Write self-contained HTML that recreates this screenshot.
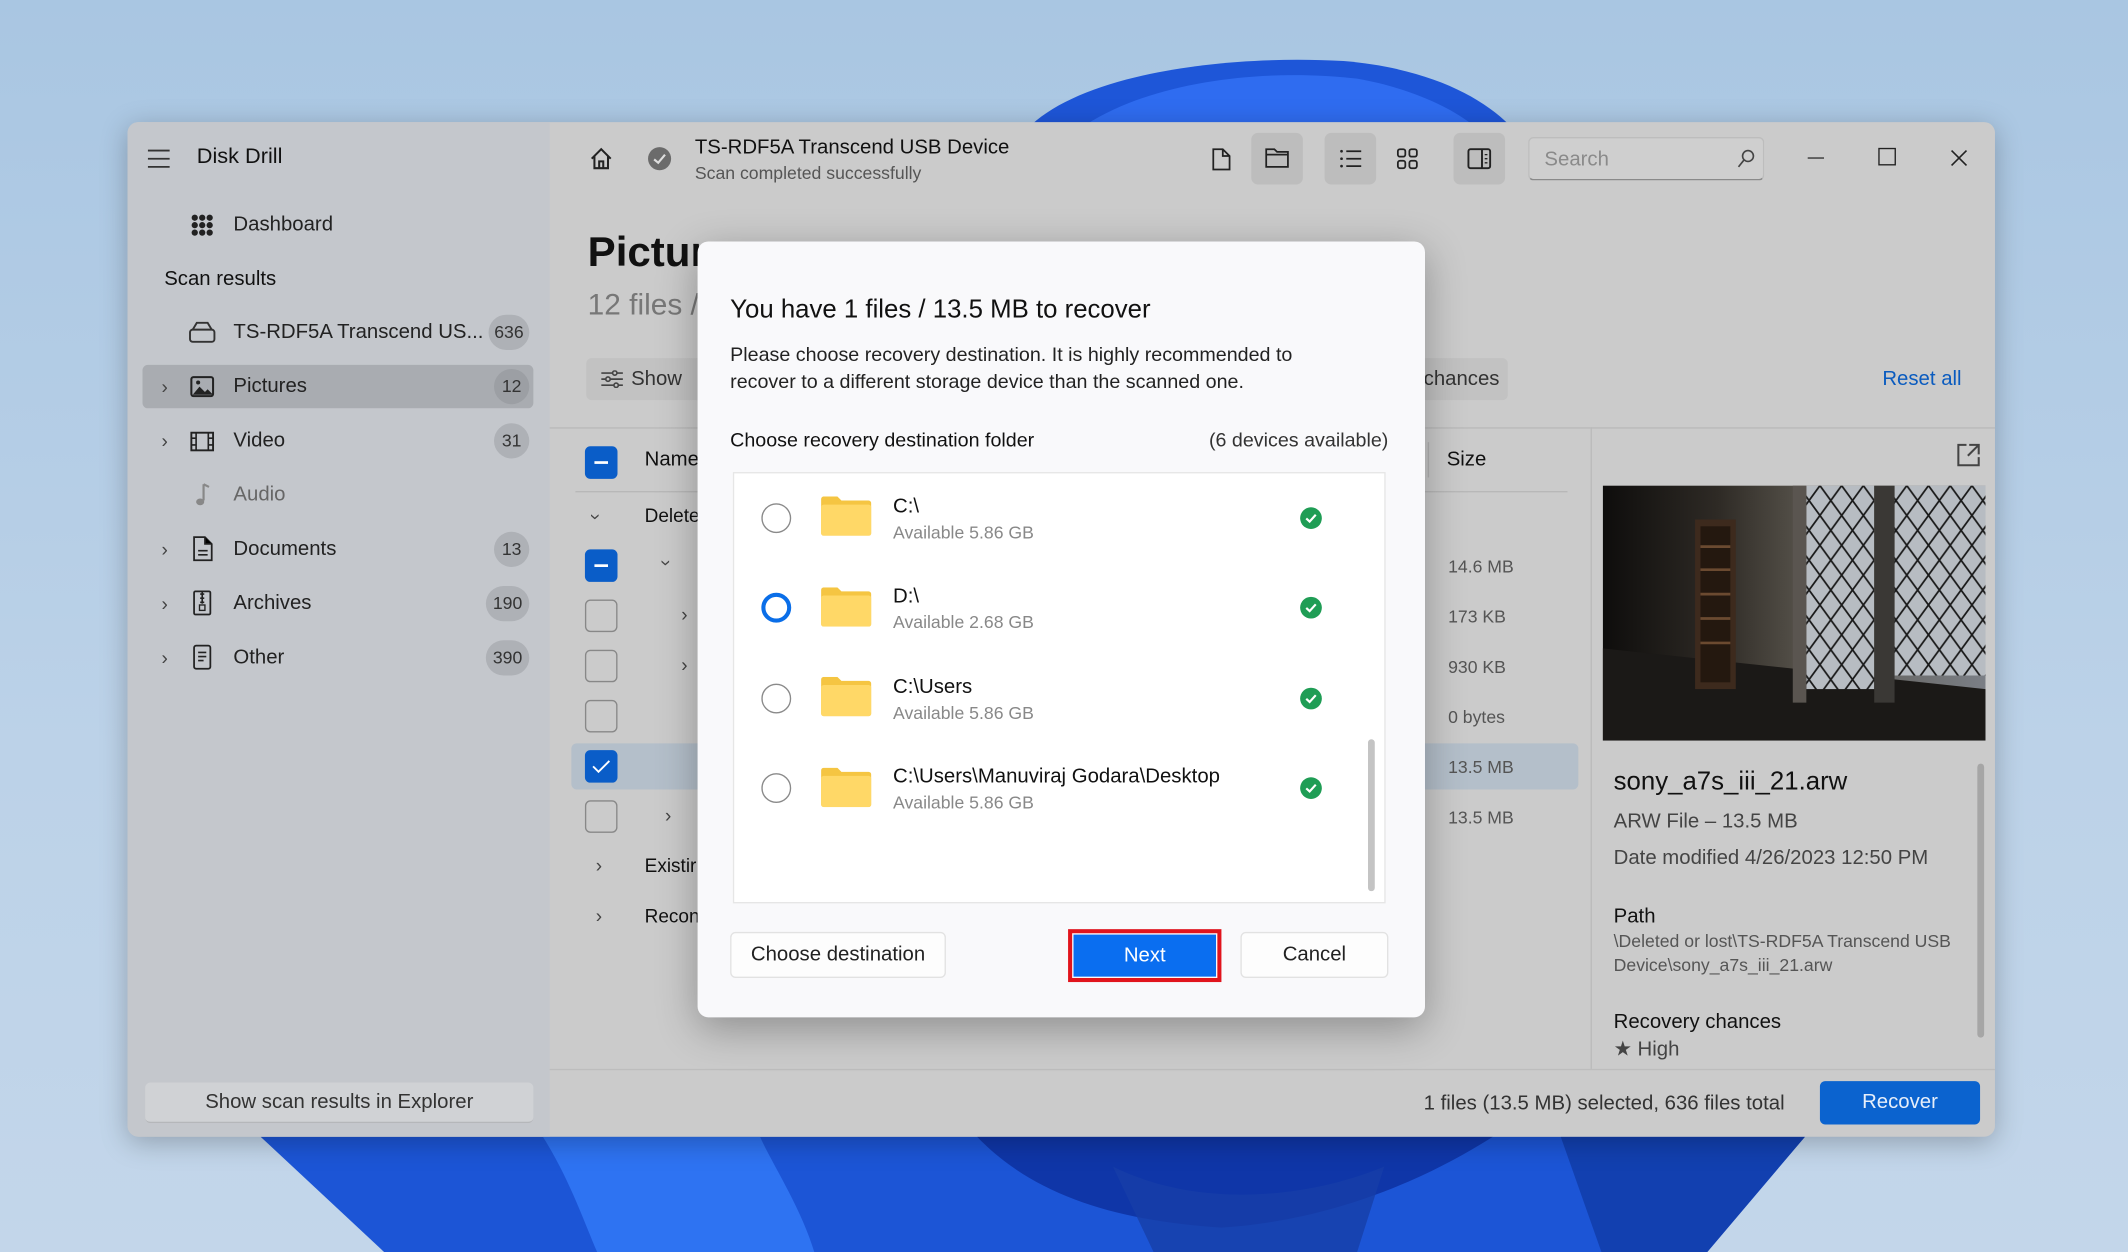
<!DOCTYPE html>
<html><head><meta charset="utf-8"><style>
*{box-sizing:border-box;margin:0;padding:0}
html,body{width:2128px;height:1252px;overflow:hidden}
body{font-family:"Liberation Sans",sans-serif;background:#b8cfe5}
#s{position:absolute;left:0;top:0;width:1568px;height:923px;transform:scale(1.35714,1.35644);transform-origin:0 0;overflow:hidden;background:linear-gradient(180deg,#a9c6e2 0%,#bcd2e8 60%,#c3d6ea 100%)}
.a{position:absolute}
.t{position:absolute;white-space:nowrap;line-height:1}
.win{left:94px;top:90px;width:1376px;height:748px;border-radius:8px;overflow:hidden;background:#cbcbcb;box-shadow:0 4px 20px rgba(0,0,0,.25)}
.side{left:0;top:0;width:311px;height:748px;background:#c4c7cc}
.badge{position:absolute;height:26px;border-radius:13px;background:#aeb1b6;font-size:13px;color:#333;text-align:center;line-height:26px}
.chev{position:absolute;font-size:14px;color:#444}
.cb{position:absolute;width:24px;height:24px;border:1.5px solid #888;border-radius:4px}
.cbb{position:absolute;width:24px;height:24px;border-radius:4px;background:#0a5dc8}
.sz{position:absolute;font-size:13px;color:#555}
.dlg{left:514px;top:178px;width:536px;height:572px;background:#f9f9fb;border-radius:8px;box-shadow:0 8px 30px rgba(0,0,0,.3)}
.rad{position:absolute;width:22px;height:22px;border-radius:50%;border:1.5px solid #8a8a8a;background:#fff}
.fold{position:absolute;width:37px;height:29px}
.ok{position:absolute;width:16px;height:16px;border-radius:50%;background:#1f9d55}
.btn{position:absolute;height:34px;border-radius:4px;background:#fdfdfd;border:1px solid #e2e2e2;font-size:15px;color:#222;text-align:center;line-height:32px}
</style></head><body><div id="s">
<svg class="a" style="left:0;top:0" width="1568" height="923">
<path d="M760 92 C800 55 900 40 990 45 C1050 50 1090 70 1112 92 Z" fill="#1e56d8"/>
<path d="M800 92 C850 60 930 50 1000 58 C1040 65 1070 80 1085 92Z" fill="#2f6cf0"/>
<path d="M192 838 L1330 838 L1258 923 L283 923 Z" fill="#1c55d6"/>
<path d="M400 838 C420 870 430 900 440 923 L600 923 C590 890 570 860 560 838Z" fill="#2e73f2"/>
<path d="M720 838 C760 880 820 900 900 905 C980 900 1050 870 1100 838Z" fill="#0f36a8"/>
<path d="M820 860 C880 890 960 885 1020 860 L1000 923 L850 923Z" fill="#163ea8" opacity=".8"/>
<path d="M1150 838 L1330 838 L1258 923 L1180 923Z" fill="#1240b0"/>
</svg>
<div class="a win">
 <div class="a side">
  <svg class="a" style="left:14px;top:20px" width="18" height="14"><path d="M1 1h16M1 7h16M1 13h16" stroke="#333" stroke-width="1.3"/></svg>
  <div class="t" style="left:51px;top:18px;font-size:16px;color:#111">Disk Drill</div>
  <svg class="a" style="left:47px;top:68px" width="16" height="16" fill="#222"><circle cx="2.5" cy="2.5" r="2.3"/><circle cx="8" cy="2.5" r="2.3"/><circle cx="13.5" cy="2.5" r="2.3"/><circle cx="2.5" cy="8" r="2.3"/><circle cx="8" cy="8" r="2.3"/><circle cx="13.5" cy="8" r="2.3"/><circle cx="2.5" cy="13.5" r="2.3"/><circle cx="8" cy="13.5" r="2.3"/><circle cx="13.5" cy="13.5" r="2.3"/></svg>
  <div class="t" style="left:78px;top:68px;font-size:15px;color:#222">Dashboard</div>
  <div class="t" style="left:27px;top:108px;font-size:15px;color:#111">Scan results</div>
  <svg class="a" style="left:45px;top:147px" width="20" height="16"><rect x="1" y="6" width="18" height="9" rx="2" fill="none" stroke="#333" stroke-width="1.4"/><path d="M3 6 L6 1 H14 L17 6" fill="none" stroke="#333" stroke-width="1.4"/></svg>
  <div class="t" style="left:78px;top:147px;font-size:15px;color:#222">TS-RDF5A Transcend US...</div>
  <div class="badge" style="left:266px;top:142px;width:30px">636</div>
  <div class="a" style="left:11px;top:179px;width:288px;height:32px;border-radius:4px;background:#a9acb1"></div>
  <div class="chev" style="left:25px;top:187px">&#8250;</div>
  <svg class="a" style="left:46px;top:187px" width="18" height="16"><rect x="1" y="1" width="16" height="14" rx="1.5" fill="none" stroke="#222" stroke-width="1.5"/><path d="M2 14 L7 8 L11 12 L13 10 L17 14Z" fill="#222"/><circle cx="6" cy="5" r="1.5" fill="#222"/></svg>
  <div class="t" style="left:78px;top:187px;font-size:15px;color:#222">Pictures</div>
  <div class="badge" style="left:270px;top:182px;width:26px;background:#9c9fa4">12</div>
  <div class="chev" style="left:25px;top:227px">&#8250;</div>
  <svg class="a" style="left:46px;top:228px" width="18" height="15"><rect x="1" y="1" width="16" height="13" fill="none" stroke="#222" stroke-width="1.4"/><path d="M4.5 1v13M13.5 1v13M1 5h3.5M1 10h3.5M13.5 5h3.5M13.5 10h3.5" stroke="#222" stroke-width="1.2"/></svg>
  <div class="t" style="left:78px;top:227px;font-size:15px;color:#222">Video</div>
  <div class="badge" style="left:270px;top:222px;width:26px">31</div>
  <svg class="a" style="left:48px;top:266px" width="14" height="18"><path d="M8 1 V13" stroke="#888" stroke-width="1.6"/><ellipse cx="5.5" cy="14" rx="3" ry="2.5" fill="#888"/><path d="M8 1 L12 3" stroke="#888" stroke-width="1.6"/></svg>
  <div class="t" style="left:78px;top:267px;font-size:15px;color:#666">Audio</div>
  <div class="chev" style="left:25px;top:307px">&#8250;</div>
  <svg class="a" style="left:48px;top:305px" width="15" height="19"><path d="M1 1h8l5 5v12H1Z" fill="none" stroke="#222" stroke-width="1.3"/><path d="M9 1v5h5M4 11h7M4 14h7" stroke="#222" stroke-width="1.2"/></svg>
  <div class="t" style="left:78px;top:307px;font-size:15px;color:#222">Documents</div>
  <div class="badge" style="left:270px;top:302px;width:26px">13</div>
  <div class="chev" style="left:25px;top:347px">&#8250;</div>
  <svg class="a" style="left:48px;top:345px" width="14" height="19"><rect x="1" y="1" width="12" height="17" rx="1" fill="none" stroke="#222" stroke-width="1.3"/><path d="M7 1v9M5.5 3h3M5.5 6h3M5.5 9h3" stroke="#222" stroke-width="1.2"/><rect x="5" y="11" width="4" height="4" fill="none" stroke="#222"/></svg>
  <div class="t" style="left:78px;top:347px;font-size:15px;color:#222">Archives</div>
  <div class="badge" style="left:264px;top:342px;width:32px">190</div>
  <div class="chev" style="left:25px;top:387px">&#8250;</div>
  <svg class="a" style="left:48px;top:385px" width="14" height="19"><rect x="1" y="1" width="12" height="17" rx="1.5" fill="none" stroke="#222" stroke-width="1.3"/><path d="M4 6h6M4 9h6M4 12h4" stroke="#222" stroke-width="1.2"/></svg>
  <div class="t" style="left:78px;top:387px;font-size:15px;color:#222">Other</div>
  <div class="badge" style="left:264px;top:382px;width:32px">390</div>
  <div class="a" style="left:13px;top:708px;width:286px;height:30px;border-radius:4px;background:#d0d2d5;border-bottom:1px solid #b5b7ba;font-size:15px;color:#333;text-align:center;line-height:30px">Show scan results in Explorer</div>
 </div>
 <!-- main header -->
 <svg class="a" style="left:340px;top:18px" width="18" height="18"><path d="M2 9 L9 2 L16 9 M4 7 V16 H14 V7 M7.5 16 V11 H10.5 V16" fill="none" stroke="#222" stroke-width="1.5"/></svg>
 <svg class="a" style="left:383px;top:18px" width="18" height="18"><circle cx="9" cy="9" r="8.5" fill="#6b6b6b"/><path d="M5 9.5 L8 12 L13 6" fill="none" stroke="#ddd" stroke-width="1.6"/></svg>
 <div class="t" style="left:418px;top:11px;font-size:15px;color:#111">TS-RDF5A Transcend USB Device</div>
 <div class="t" style="left:418px;top:31px;font-size:13px;color:#555">Scan completed successfully</div>
 <svg class="a" style="left:799px;top:19px" width="14" height="17"><path d="M1 1h7l5 5v10H1Z M8 1v5h5" fill="none" stroke="#222" stroke-width="1.3"/></svg>
 <div class="a" style="left:828px;top:8px;width:38px;height:38px;border-radius:5px;background:#bdbdbd"></div>
 <svg class="a" style="left:838px;top:19px" width="18" height="15"><path d="M1 1h6l2 2h8v11H1Z M1 5h16" fill="none" stroke="#222" stroke-width="1.3"/></svg>
 <div class="a" style="left:882px;top:8px;width:38px;height:38px;border-radius:5px;background:#bdbdbd"></div>
 <svg class="a" style="left:893px;top:20px" width="17" height="14"><path d="M5 1.5h11M5 7h11M5 12.5h11" stroke="#222" stroke-width="1.3"/><circle cx="1.5" cy="1.5" r="1" fill="#222"/><circle cx="1.5" cy="7" r="1" fill="#222"/><circle cx="1.5" cy="12.5" r="1" fill="#222"/></svg>
 <svg class="a" style="left:935px;top:19px" width="16" height="16" fill="none" stroke="#222" stroke-width="1.3"><rect x="1" y="1" width="5.5" height="5.5" rx="1.5"/><rect x="9.5" y="1" width="5.5" height="5.5" rx="1.5"/><rect x="1" y="9.5" width="5.5" height="5.5" rx="1.5"/><rect x="9.5" y="9.5" width="5.5" height="5.5" rx="1.5"/></svg>
 <div class="a" style="left:977px;top:8px;width:38px;height:38px;border-radius:5px;background:#bdbdbd"></div>
 <svg class="a" style="left:987px;top:19px" width="18" height="16"><rect x="1" y="1" width="16" height="14" rx="1.5" fill="none" stroke="#222" stroke-width="1.4"/><path d="M11 1v14" stroke="#222" stroke-width="1.4"/><path d="M13 5h2M13 8h2M13 11h2" stroke="#222"/></svg>
 <div class="a" style="left:1032px;top:11px;width:174px;height:32px;border-radius:4px;background:#cfcfcf;border:1px solid #bdbdbd;border-bottom:1.5px solid #8a8a8a"></div>
 <div class="t" style="left:1044px;top:20px;font-size:15px;color:#8a8a8a">Search</div>
 <svg class="a" style="left:1186px;top:20px" width="13" height="14"><circle cx="8" cy="5" r="4" fill="none" stroke="#444" stroke-width="1.2"/><path d="M5 8 L1 13" stroke="#444" stroke-width="1.2"/></svg>
 <div class="a" style="left:1238px;top:26px;width:12px;height:1px;background:#333"></div>
 <div class="a" style="left:1290px;top:19px;width:13px;height:13px;border:1.2px solid #222"></div>
 <svg class="a" style="left:1343px;top:20px" width="13" height="13"><path d="M1 1L12 12M12 1L1 12" stroke="#222" stroke-width="1.2"/></svg>
 <div class="t" style="left:339px;top:80px;font-size:31px;font-weight:bold;color:#111">Pictur</div>
 <div class="t" style="left:339px;top:124px;font-size:22px;color:#777">12 files /</div>
 <div class="a" style="left:338px;top:174px;width:90px;height:31px;border-radius:4px;background:#c2c2c2"></div>
 <svg class="a" style="left:349px;top:183px" width="16" height="13" stroke="#444" stroke-width="1.2"><path d="M0 2h16M0 6.5h16M0 11h16"/><circle cx="10" cy="2" r="1.6" fill="#c2c2c2"/><circle cx="5" cy="6.5" r="1.6" fill="#c2c2c2"/><circle cx="11" cy="11" r="1.6" fill="#c2c2c2"/></svg>
 <div class="t" style="left:371px;top:182px;font-size:15px;color:#333">Show</div>
 <div class="a" style="left:940px;top:174px;width:77px;height:31px;border-radius:4px;background:#c2c2c2"></div>
 <div class="t" style="left:955px;top:182px;font-size:15px;color:#333">chances</div>
 <div class="t" style="left:1293px;top:182px;font-size:15px;color:#0a5bbf">Reset all</div>
 <div class="a" style="left:311px;top:225px;width:1065px;height:1px;background:#bababa"></div>
 <div class="a" style="left:1078px;top:225px;width:1px;height:473px;background:#bababa"></div>
 <div class="cbb" style="left:337px;top:239px"><div class="a" style="left:7px;top:11px;width:10px;height:1.6px;background:#fff"></div></div>
 <div class="t" style="left:381px;top:241px;font-size:15px;color:#111">Name</div>
 <div class="a" style="left:958px;top:236px;width:1px;height:26px;background:#b5b5b5"></div>
 <div class="t" style="left:972px;top:241px;font-size:15px;color:#111">Size</div>
 <div class="a" style="left:330px;top:272px;width:731px;height:1px;background:#b8b8b8"></div>
 <div class="chev" style="left:343px;top:283px;transform:rotate(90deg)">&#8250;</div>
 <div class="t" style="left:381px;top:283px;font-size:14px;color:#111">Delete</div>
 <div class="cbb" style="left:337px;top:315px"><div class="a" style="left:7px;top:11px;width:10px;height:1.6px;background:#fff"></div></div>
 <div class="chev" style="left:395px;top:317px;transform:rotate(90deg)">&#8250;</div>
 <div class="cb" style="left:337px;top:352px"></div><div class="chev" style="left:408px;top:355px">&#8250;</div>
 <div class="cb" style="left:337px;top:389px"></div><div class="chev" style="left:408px;top:392px">&#8250;</div>
 <div class="cb" style="left:337px;top:426px"></div>
 <div class="a" style="left:327px;top:458px;width:742px;height:34px;border-radius:4px;background:#b4bfca"></div>
 <div class="cbb" style="left:337px;top:463px"><svg class="a" style="left:5px;top:6px" width="14" height="12"><path d="M1 6 L5 10 L13 2" fill="none" stroke="#fff" stroke-width="1.4"/></svg></div>
 <div class="cb" style="left:337px;top:500px"></div><div class="chev" style="left:396px;top:503px">&#8250;</div>
 <div class="chev" style="left:345px;top:540px">&#8250;</div><div class="t" style="left:381px;top:541px;font-size:14px;color:#111">Existir</div>
 <div class="chev" style="left:345px;top:577px">&#8250;</div><div class="t" style="left:381px;top:578px;font-size:14px;color:#111">Recon</div>
 <div class="sz" style="left:973px;top:320px">14.6 MB</div>
 <div class="sz" style="left:973px;top:357px">173 KB</div>
 <div class="sz" style="left:973px;top:394px">930 KB</div>
 <div class="sz" style="left:973px;top:431px">0 bytes</div>
 <div class="sz" style="left:973px;top:468px">13.5 MB</div>
 <div class="sz" style="left:973px;top:505px">13.5 MB</div>
 <svg class="a" style="left:1348px;top:237px" width="17" height="17"><path d="M7 1H1V16H16V10" fill="none" stroke="#444" stroke-width="1.5"/><path d="M9 1H16V8M16 1L8 9" fill="none" stroke="#444" stroke-width="1.5"/></svg>
 <svg class="a" style="left:1087px;top:268px" width="282" height="188">
  <defs><linearGradient id="g1" x1="0" x2="1"><stop offset="0" stop-color="#0e0d0c"/><stop offset=".3" stop-color="#2e2a25"/><stop offset=".55" stop-color="#5b574f"/><stop offset="1" stop-color="#7b7f86"/></linearGradient>
  <pattern id="lat" width="16" height="22" patternUnits="userSpaceOnUse"><rect width="16" height="22" fill="#b7bcc2"/><path d="M0 0L16 22M16 0L0 22" stroke="#1a1a1a" stroke-width="1.3"/></pattern></defs>
  <rect width="282" height="188" fill="url(#g1)"/>
  <path d="M0 120 L282 150 L282 188 L0 188Z" fill="#1b1917"/>
  <rect x="68" y="25" width="30" height="125" fill="#3d2a1d"/>
  <rect x="72" y="30" width="22" height="115" fill="#24180f"/>
  <path d="M72 45h22M72 62h22M72 80h22M72 98h22M72 116h22" stroke="#6b4a30" stroke-width="2"/>
  <rect x="150" y="0" width="50" height="150" fill="url(#lat)"/>
  <rect x="215" y="0" width="67" height="140" fill="url(#lat)"/>
  <rect x="200" y="0" width="15" height="160" fill="#3a3835"/>
  <rect x="140" y="0" width="10" height="160" fill="#5a5550"/>
 </svg>
 <div class="t" style="left:1095px;top:477px;font-size:19px;color:#111">sony_a7s_iii_21.arw</div>
 <div class="t" style="left:1095px;top:508px;font-size:15px;color:#444">ARW File – 13.5 MB</div>
 <div class="t" style="left:1095px;top:535px;font-size:15px;color:#444">Date modified 4/26/2023 12:50 PM</div>
 <div class="t" style="left:1095px;top:578px;font-size:15px;color:#111">Path</div>
 <div class="t" style="left:1095px;top:597px;font-size:13px;color:#555">\Deleted or lost\TS-RDF5A Transcend USB</div>
 <div class="t" style="left:1095px;top:615px;font-size:13px;color:#555">Device\sony_a7s_iii_21.arw</div>
 <div class="t" style="left:1095px;top:656px;font-size:15px;color:#111">Recovery chances</div>
 <div class="t" style="left:1095px;top:676px;font-size:15px;color:#444">★ High</div>
 <div class="a" style="left:1363px;top:473px;width:5px;height:202px;border-radius:3px;background:#a6a6a6"></div>
 <div class="a" style="left:311px;top:698px;width:1065px;height:1px;background:#bdbdbd"></div>
 <div class="t" style="left:955px;top:716px;font-size:15px;color:#333">1 files (13.5 MB) selected, 636 files total</div>
 <div class="a" style="left:1247px;top:707px;width:118px;height:32px;border-radius:4px;background:#0b63cf;color:#e6eefa;font-size:15px;text-align:center;line-height:32px">Recover</div>
</div>
<div class="a dlg">
 <div class="t" style="left:24px;top:41px;font-size:19px;color:#111">You have 1 files / 13.5 MB to recover</div>
 <div class="t" style="left:24px;top:77px;font-size:14.5px;color:#222">Please choose recovery destination. It is highly recommended to</div>
 <div class="t" style="left:24px;top:97px;font-size:14.5px;color:#222">recover to a different storage device than the scanned one.</div>
 <div class="t" style="left:24px;top:140px;font-size:14.5px;color:#111">Choose recovery destination folder</div>
 <div class="t" style="right:27px;top:140px;font-size:14.5px;color:#333">(6 devices available)</div>
 <div class="a" style="left:26px;top:170px;width:481px;height:318px;background:#fff;border:1px solid #e6e6e6"></div>
 <div class="rad" style="left:47px;top:193px"></div>
 <div class="rad" style="left:47px;top:259px;border:3.5px solid #0a6ee8"></div>
 <div class="rad" style="left:47px;top:326px"></div>
 <div class="rad" style="left:47px;top:392px"></div>
 <svg class="fold" style="left:91px;top:188px" viewBox="0 0 37 29"><path d="M0 2a2 2 0 0 1 2-2h10l3 3h20a2 2 0 0 1 2 2v22a2 2 0 0 1-2 2H2a2 2 0 0 1-2-2Z" fill="#f5c542"/><rect y="6" width="37" height="23" rx="2" fill="#ffd867"/></svg>
 <svg class="fold" style="left:91px;top:255px" viewBox="0 0 37 29"><path d="M0 2a2 2 0 0 1 2-2h10l3 3h20a2 2 0 0 1 2 2v22a2 2 0 0 1-2 2H2a2 2 0 0 1-2-2Z" fill="#f5c542"/><rect y="6" width="37" height="23" rx="2" fill="#ffd867"/></svg>
 <svg class="fold" style="left:91px;top:321px" viewBox="0 0 37 29"><path d="M0 2a2 2 0 0 1 2-2h10l3 3h20a2 2 0 0 1 2 2v22a2 2 0 0 1-2 2H2a2 2 0 0 1-2-2Z" fill="#f5c542"/><rect y="6" width="37" height="23" rx="2" fill="#ffd867"/></svg>
 <svg class="fold" style="left:91px;top:388px" viewBox="0 0 37 29"><path d="M0 2a2 2 0 0 1 2-2h10l3 3h20a2 2 0 0 1 2 2v22a2 2 0 0 1-2 2H2a2 2 0 0 1-2-2Z" fill="#f5c542"/><rect y="6" width="37" height="23" rx="2" fill="#ffd867"/></svg>
 <div class="t" style="left:144px;top:188px;font-size:15px;color:#111">C:\</div>
 <div class="t" style="left:144px;top:208px;font-size:13px;color:#888">Available 5.86 GB</div>
 <div class="t" style="left:144px;top:254px;font-size:15px;color:#111">D:\</div>
 <div class="t" style="left:144px;top:274px;font-size:13px;color:#888">Available 2.68 GB</div>
 <div class="t" style="left:144px;top:321px;font-size:15px;color:#111">C:\Users</div>
 <div class="t" style="left:144px;top:341px;font-size:13px;color:#888">Available 5.86 GB</div>
 <div class="t" style="left:144px;top:387px;font-size:15px;color:#111">C:\Users\Manuviraj Godara\Desktop</div>
 <div class="t" style="left:144px;top:407px;font-size:13px;color:#888">Available 5.86 GB</div>
 <div class="ok" style="left:444px;top:196px"><svg width="16" height="16"><path d="M4.5 8.2 L7 10.5 L11.5 5.5" fill="none" stroke="#fff" stroke-width="1.6"/></svg></div>
 <div class="ok" style="left:444px;top:262px"><svg width="16" height="16"><path d="M4.5 8.2 L7 10.5 L11.5 5.5" fill="none" stroke="#fff" stroke-width="1.6"/></svg></div>
 <div class="ok" style="left:444px;top:329px"><svg width="16" height="16"><path d="M4.5 8.2 L7 10.5 L11.5 5.5" fill="none" stroke="#fff" stroke-width="1.6"/></svg></div>
 <div class="ok" style="left:444px;top:395px"><svg width="16" height="16"><path d="M4.5 8.2 L7 10.5 L11.5 5.5" fill="none" stroke="#fff" stroke-width="1.6"/></svg></div>
 <div class="a" style="left:494px;top:367px;width:5px;height:112px;border-radius:3px;background:#c4c4c4"></div>
 <div class="btn" style="left:24px;top:509px;width:159px">Choose destination</div>
 <div class="a" style="left:273px;top:507px;width:113px;height:39px;border:3px solid #e1141c"></div>
 <div class="a" style="left:277px;top:511px;width:105px;height:31px;background:#0a6ef0;color:#fff;font-size:15px;text-align:center;line-height:31px">Next</div>
 <div class="btn" style="left:400px;top:509px;width:109px">Cancel</div>
</div>
</div></body></html>
